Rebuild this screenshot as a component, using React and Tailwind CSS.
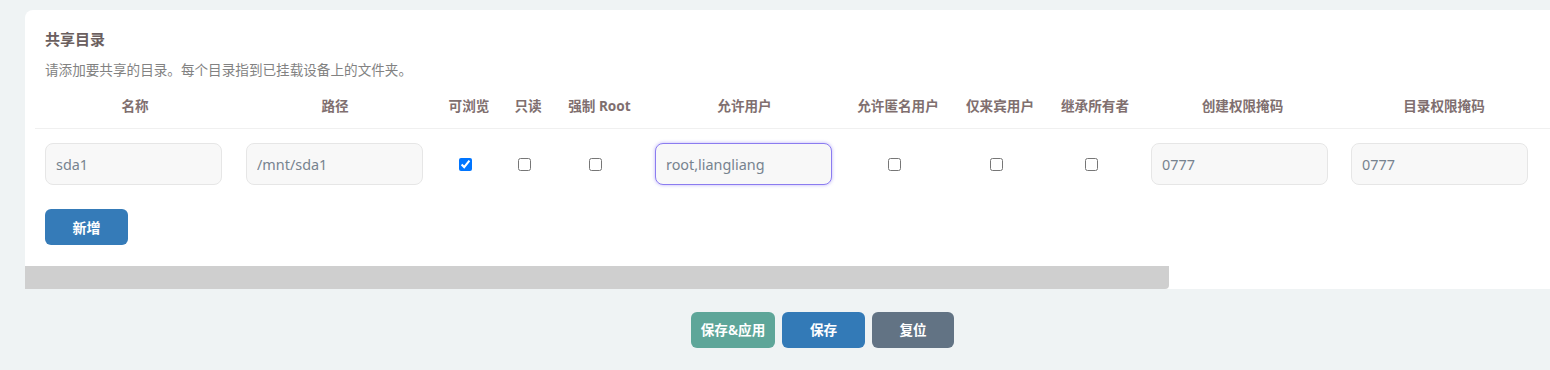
import React from "react";

const font = { fontFamily: '"Noto Sans", "Noto Sans CJK SC", sans-serif' };

// column widths follow the reference table
const cols = "grid grid-cols-[200px_200px_68px_50px_93px_197px_110px_94px_96px_199px_204px]";

const headers = ["名称", "路径", "可浏览", "只读", "强制 Root", "允许用户", "允许匿名用户", "仅来宾用户", "继承所有者", "创建权限掩码", "目录权限掩码"];

const TextInput = ({ value, focused }) => {
  return (
    <input
      type="text"
      defaultValue={value}
      className={`w-[177px] h-[42px] rounded-lg bg-[#f8f8f8] px-[10px] text-[14.4px] text-[#77838f] outline-none ${
        focused ? "border border-[#8b7cf0] shadow-[0_0_3px_1px_rgba(139,124,240,0.35)]" : "border border-[#e6e6e6]"
      }`}
      style={font}
    />
  );
};

const Check = ({ checked }) => {
  return (
    <input type="checkbox" defaultChecked={checked} className="m-0 mr-2 w-[13px] h-[13px]" />
  );
};

const Cell = ({ children }) => {
  return <div className="flex items-center justify-center">{children}</div>;
};

const InputCell = ({ children, pad }) => {
  return <div className={`flex items-center ${pad}`}>{children}</div>;
};

export default function App() {
  return (
    <div className="min-h-screen bg-[#eff3f4] pt-[10px]" style={font}>
      <div className="ml-[25px] bg-white rounded-tl-lg overflow-hidden">
        <div className="pt-[19px] px-[20px]">
          <h3 className="text-[15px] leading-[20px] font-bold text-[#6b5f5f]">共享目录</h3>
          <p className="mt-[12px] text-[13.6px] leading-[18px] text-[#828282]">请添加要共享的目录。每个目录指到已挂载设备上的文件夹。</p>
        </div>

        <div className="ml-[10px] mt-[7px]">
          <div className={`${cols} pt-[10px] pb-[12px] border-b border-[#f0f0f0]`}>
            {headers.map((h) => (
              <div key={h} className="text-center text-[13.6px] leading-[20px] font-bold text-[#806f6f] whitespace-nowrap">
                {h}
              </div>
            ))}
          </div>

          <div className={`${cols} pt-[14px]`}>
            <InputCell pad="pl-[10px]"><TextInput value="sda1" /></InputCell>
            <InputCell pad="pl-[11px]"><TextInput value="/mnt/sda1" /></InputCell>
            <Cell><Check checked /></Cell>
            <Cell><Check /></Cell>
            <Cell><Check /></Cell>
            <InputCell pad="pl-[9px]"><TextInput value="root,liangliang" focused /></InputCell>
            <Cell><Check /></Cell>
            <Cell><Check /></Cell>
            <Cell><Check /></Cell>
            <InputCell pad="pl-[8px]"><TextInput value="0777" /></InputCell>
            <InputCell pad="pl-[9px]"><TextInput value="0777" /></InputCell>
          </div>

          <button className="mt-[24px] ml-[10px] w-[83px] h-[36px] rounded-md bg-[#357bb8] text-white text-[14px] font-bold">
            新增
          </button>
        </div>

        <div className="mt-[21px] w-[1144px] h-[23px] bg-[#cfcfcf] rounded-br-sm"></div>
      </div>

      <div className="flex justify-center gap-[7px] pl-[95px] mt-[23px]">
        <button className="w-[84px] h-[36px] rounded-md bg-[#5ea699] text-white text-[13.6px] font-semibold">保存&amp;应用</button>
        <button className="w-[83px] h-[36px] rounded-md bg-[#337ab7] text-white text-[13.6px] font-semibold">保存</button>
        <button className="w-[82px] h-[36px] rounded-md bg-[#627384] text-white text-[13.6px] font-semibold">复位</button>
      </div>
    </div>
  );
}
